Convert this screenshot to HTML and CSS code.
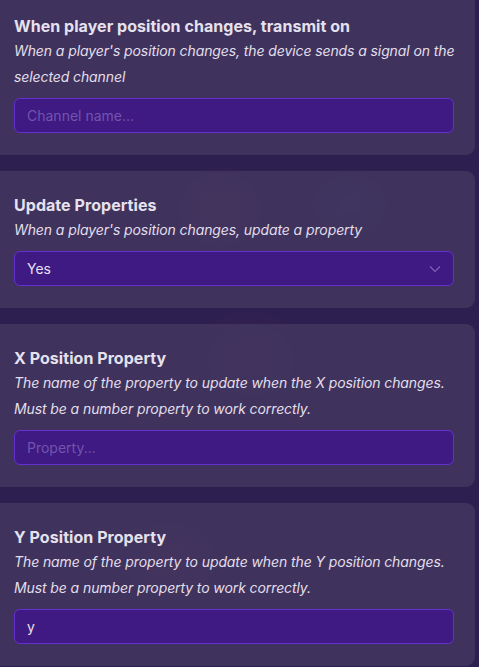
FILE: index.html
```html
<!DOCTYPE html>
<html>
<head>
<meta charset="utf-8">
<link rel="stylesheet" href="styles.css">
</head>
<body>
<div class="list">
  <section class="card">
    <h2 class="title">When player position changes, transmit on</h2>
    <p class="desc">When a player's position changes, the device sends a signal on the selected channel</p>
    <div class="field"><span class="placeholder">Channel name...</span></div>
  </section>
  <section class="card">
    <h2 class="title">Update Properties</h2>
    <p class="desc">When a player's position changes, update a property</p>
    <div class="field select"><span class="value">Yes</span>
      <svg class="chev" width="12" height="8" viewBox="0 0 12 8"><path d="M1 1.5 L6 6.5 L11 1.5" fill="none" stroke="#7d62b8" stroke-width="1.2"/></svg>
    </div>
  </section>
  <section class="card">
    <h2 class="title">X Position Property</h2>
    <p class="desc">The name of the property to update when the X position changes. Must be a number property to work correctly.</p>
    <div class="field"><span class="placeholder">Property...</span></div>
  </section>
  <section class="card">
    <h2 class="title">Y Position Property</h2>
    <p class="desc">The name of the property to update when the Y position changes. Must be a number property to work correctly.</p>
    <div class="field"><span class="value">y</span></div>
  </section>
</div>
</body>
</html>
```
FILE: styles.css
```css
html, body {
  margin: 0;
  padding: 0;
  height: 100%;
  overflow: hidden;
}
body {
  font-family: Inter, "Noto Sans", sans-serif;
  background-color: #2d2050;
  background-image:
    radial-gradient(ellipse 50px 45px at 220px 210px, rgba(150, 50, 90, 0.22), transparent),
    radial-gradient(ellipse 50px 40px at 350px 205px, rgba(60, 70, 160, 0.25), transparent),
    radial-gradient(ellipse 60px 50px at 250px 360px, rgba(130, 40, 90, 0.18), transparent),
    radial-gradient(ellipse 60px 50px at 170px 560px, rgba(140, 50, 100, 0.18), transparent);
}
.list {
  display: flex;
  flex-direction: column;
  gap: 16px;
  margin-top: -8px;
  width: 483px;
  margin-left: -8px;
}
.card {
  background: rgba(68, 56, 96, 0.8);
  border-radius: 9px;
  padding: 22px 12px 22px 22px;
}
.title {
  margin: 0;
  font-size: 16px;
  line-height: 24px;
  font-weight: 700;
  color: #e6e1ee;
  letter-spacing: 0.05px;
}
.desc {
  margin: 0;
  font-size: 14px;
  line-height: 26px;
  font-style: italic;
  color: #e3dfeb;
  letter-spacing: -0.1px;
}
.field {
  margin-top: 8px;
  height: 35px;
  box-sizing: border-box;
  background: #3e1a82;
  border: 1px solid #6431d0;
  border-radius: 6px;
  padding: 0 12px;
  display: flex;
  align-items: center;
  justify-content: space-between;
  width: 440px;
  font-size: 14px;
}
.placeholder {
  color: #7354ad;
}
.value {
  color: #e6e1ee;
}
```
